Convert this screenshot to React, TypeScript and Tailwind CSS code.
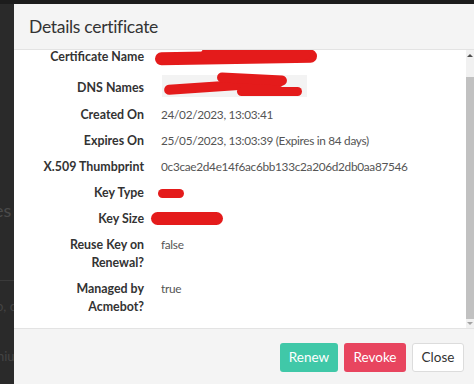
import React from "react";

const font = { fontFamily: 'Lato, "Open Sans", sans-serif' };

function Row({ label, children, className = "" }: { label: React.ReactNode; children?: React.ReactNode; className?: string }) {
  return (
    <div className={"flex py-[4px] leading-[18px] " + className}>
      <div className="w-[130px] shrink-0 text-right font-bold text-[12.4px] text-[#333] pl-[20px]">{label}</div>
      <div className="pl-[17px] text-[11.8px] tracking-[-0.3px] text-[#555]">{children}</div>
    </div>
  );
}

function Red({ className }: { className: string }) {
  return <div className={"absolute bg-[#e41b1b] rounded-full " + className} />;
}

export default function App() {
  return (
    <div className="relative w-[474px] h-[384px] overflow-hidden bg-[#2a2a2a]" style={font}>
      <div className="absolute left-0 top-0 w-full h-[4px] bg-[#1c1c1c]" />
      <div className="absolute left-[-6px] top-[197px] text-[18px] text-[#4a4a4a]">es</div>
      <div className="absolute left-0 top-[280px] w-[14px] h-px bg-[#3a3a3a]" />
      <div className="absolute left-[-4px] top-[297px] text-[13px] text-[#444]">o, c</div>
      <div className="absolute left-[-3px] top-[347px] text-[13px] text-[#444]">hiu</div>

      <div className="relative ml-[14px] mt-[4px] w-[460px] flex flex-col">
        <div className="h-[46px] bg-[#f4f4f4] border-b border-[#e3e3e3] flex items-center pl-[15px]">
          <span className="text-[17.5px] tracking-[-0.3px] text-[#333] leading-none">Details certificate</span>
        </div>
        <div className="relative h-[278px] bg-white overflow-hidden flex">
          <div className="flex-1 -mt-[6px]">
            <Row label="Certificate Name">
              <div className="relative h-[18px] w-[160px]">
                <Red className="left-[-6px] top-[3px] w-[162px] h-[13px] rotate-[-1deg]" />
                <Red className="left-[40px] top-[0px] w-[110px] h-[12px]" />
              </div>
            </Row>
            <div className="flex leading-[18px] h-[32px]">
              <div className="w-[130px] shrink-0 text-right font-bold text-[12.4px] text-[#333] pt-[9px]">DNS Names</div>
              <div className="pl-[18px] pt-[5px]">
                <div className="relative h-[22px] w-[145px] bg-[#f3f3f3]">
                  <Red className="left-[2px] top-[6px] w-[120px] h-[10px] rotate-[-4deg]" />
                  <Red className="left-[55px] top-[-1px] w-[70px] h-[10px] rotate-[3deg]" />
                  <Red className="left-[75px] top-[12px] w-[65px] h-[9px]" />
                </div>
              </div>
            </div>
            <Row label="Created On">24/02/2023, 13:03:41</Row>
            <Row label="Expires On">25/05/2023, 13:03:39 (Expires in 84 days)</Row>
            <Row label="X.509 Thumbprint">0c3cae2d4e14f6ac6bb133c2a206d2db0aa87546</Row>
            <Row label="Key Type">
              <div className="relative h-[18px] w-[30px]">
                <Red className="left-[-3px] top-[5px] w-[26px] h-[9px]" />
              </div>
            </Row>
            <Row label="Key Size">
              <div className="relative h-[18px] w-[80px]">
                <Red className="left-[-10px] top-[2px] w-[72px] h-[13px]" />
              </div>
            </Row>
            <Row label={<>Reuse Key on<br />Renewal?</>}>false</Row>
            <Row label={<>Managed by<br />Acmebot?</>}>true</Row>
          </div>
          <div className="w-[8px] shrink-0 bg-[#f1f1f1] flex flex-col items-center">
            <div className="h-[10px] flex items-center justify-center">
              <div className="w-0 h-0 border-l-[3px] border-r-[3px] border-b-[3px] border-l-transparent border-r-transparent border-b-[#505050]" />
            </div>
            <div className="mt-[17px] w-[8px] h-[242px] bg-[#c1c1c1]" />
            <div className="h-[8px] flex items-center justify-center">
              <div className="w-0 h-0 border-l-[3px] border-r-[3px] border-t-[3px] border-l-transparent border-r-transparent border-t-[#a3a3a3]" />
            </div>
          </div>
        </div>
        <div className="h-[70px] bg-[#f4f4f4] border-t border-[#e3e3e3] flex justify-end items-start pt-[14px] pr-[10px] gap-[6px] text-[13.5px]">
          <button className="h-[29px] w-[58px] rounded-[3px] bg-[#40c8a8] text-white">Renew</button>
          <button className="h-[29px] w-[62px] rounded-[3px] bg-[#e8455f] text-white">Revoke</button>
          <button className="h-[29px] w-[52px] rounded-[3px] bg-white border border-[#dcdcdc] text-[#333]">Close</button>
        </div>
      </div>
    </div>
  );
}
